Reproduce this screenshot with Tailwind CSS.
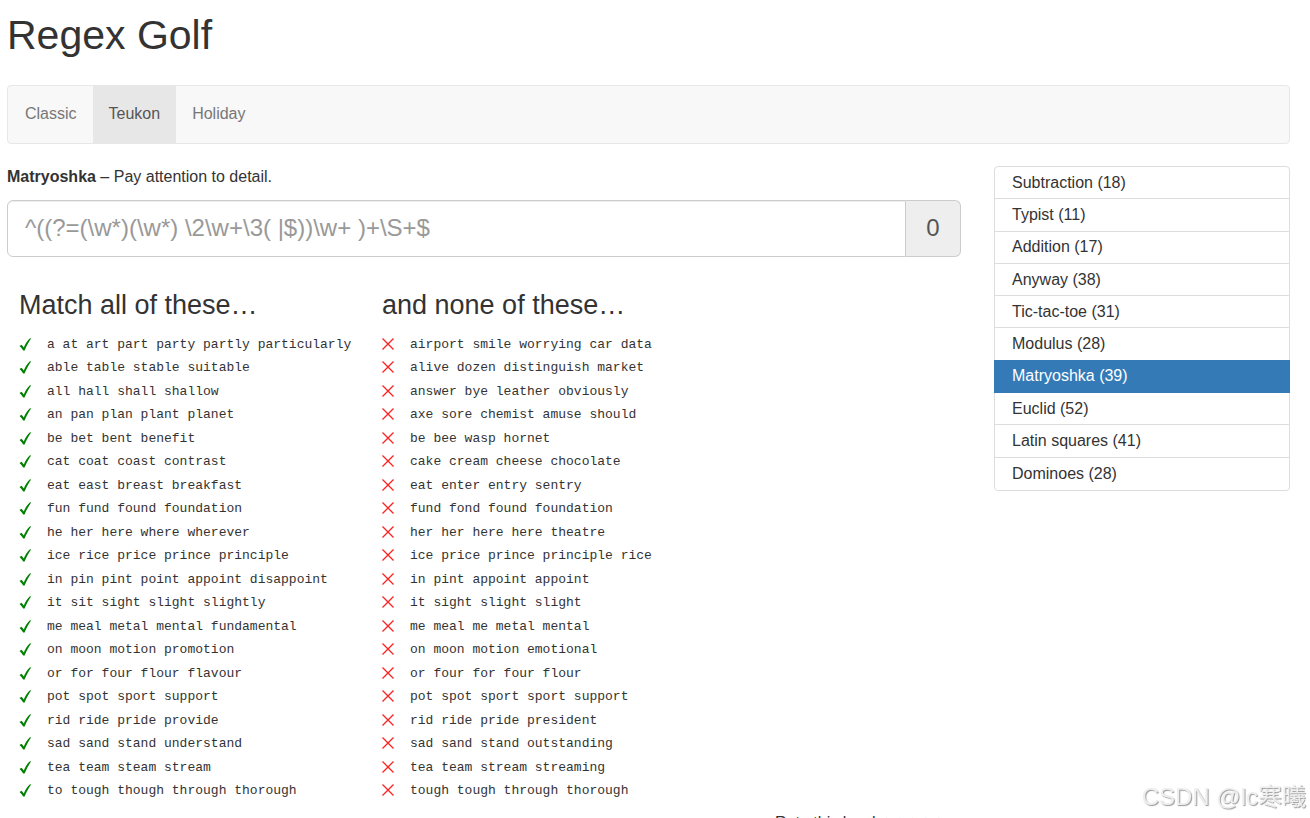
<!DOCTYPE html>
<html lang="en">
<head>
    <meta charset="UTF-8">
    <meta name="viewport" content="width=device-width, initial-scale=1.0">
    <title>Regex Golf</title>
    <script src="https://cdn.jsdelivr.net/npm/@tailwindcss/browser@4"></script>
</head>
<body class="h-screen overflow-hidden bg-white pl-[7px] pr-5 font-['Liberation_Sans',Arial,sans-serif] text-base text-[#333]">

    <!-- Shared icons -->
    <svg class="hidden" xmlns="http://www.w3.org/2000/svg">
        <symbol id="icon-yes" viewBox="0 1 14 14">
            <path d="M0.5 9 L2.6 7.8 L4.8 10.6 C6.2 6.8 8.2 3.6 11 1.2 L12.1 1.4 C9.6 5 7.4 9 5.6 13.4 L4.2 13.4 C3 11.8 1.9 10.4 0.5 9 Z" fill="#008000"/>
        </symbol>
        <symbol id="icon-no" viewBox="0 1 14 14">
            <path d="M0.5 1.5 L11.5 12.5 M11.5 1.5 L0.5 12.5" fill="none" stroke="#ff2020" stroke-width="1.3"/>
        </symbol>
    </svg>

    <h1 class="pt-[13px] text-[41px] leading-[45px]">Regex Golf</h1>

    <nav class="mt-[27px] flex h-[59px] rounded border border-[#e7e7e7] bg-[#f8f8f8] pl-px text-[#777]">
        <a href="#classic" class="px-4 py-4">Classic</a>
        <a href="#teukon" class="bg-[#e7e7e7] px-4 py-4 text-[#555]">Teukon</a>
        <a href="#holiday" class="px-4 py-4">Holiday</a>
    </nav>

    <div class="mt-[22px] grid grid-cols-[minmax(0,1fr)_296px] items-start gap-[33px]">
        <main>
            <p class="leading-[22px]"><label for="regex"><b>Matryoshka</b> – Pay attention to detail.</label></p>

            <div class="mt-3 flex h-[57px] text-2xl">
                <input id="regex" type="text" placeholder="^((?=(\w*)(\w*) \2\w+\3( |$))\w+ )+\S+$" class="min-w-0 flex-1 rounded-l-md border border-[#ccc] px-[17px] pb-[2px] shadow-[inset_0_1px_1px_rgba(0,0,0,0.075)] placeholder:text-[#999]">
                <output for="regex" class="flex w-[55px] items-center justify-center rounded-r-md border border-l-0 border-[#ccc] bg-[#eee] pb-[2px] text-[#555]">0</output>
            </div>

            <div class="mt-8 flex gap-[22px] pl-3">
                <section>
                    <h3 class="text-[27px] leading-8">Match all of these…</h3>
                    <ul id="match-list" class="mt-3 grid min-h-[470px] w-[341px] auto-rows-fr items-center font-['Liberation_Mono','Courier_New',monospace] text-[13px] leading-5"></ul>
                </section>
                <section>
                    <h3 class="text-[27px] leading-8">and none of these…</h3>
                    <ul id="none-list" class="mt-3 grid min-h-[470px] auto-rows-fr items-center font-['Liberation_Mono','Courier_New',monospace] text-[13px] leading-5"></ul>
                </section>
            </div>

            <p class="mt-[10px] pr-4 text-right leading-5">Rate this level <span class="text-[15px] text-[#bbb]">☆☆☆☆☆</span></p>
        </main>

        <aside class="grid min-h-[325px] auto-rows-fr divide-y divide-[#ddd] rounded border border-[#ddd] leading-5">
            <a href="#subtraction" class="flex items-center px-[17px]">Subtraction (18)</a>
            <a href="#typist" class="flex items-center px-[17px]">Typist (11)</a>
            <a href="#addition" class="flex items-center px-[17px]">Addition (17)</a>
            <a href="#anyway" class="flex items-center px-[17px]">Anyway (38)</a>
            <a href="#tic-tac-toe" class="flex items-center px-[17px]">Tic-tac-toe (31)</a>
            <a href="#modulus" class="flex items-center px-[17px]">Modulus (28)</a>
            <a href="#matryoshka" class="-mx-px -mt-px flex items-center border-[#337ab7] bg-[#337ab7] px-[18px] pt-px text-white">Matryoshka (39)</a>
            <a href="#euclid" class="flex items-center px-[17px]">Euclid (52)</a>
            <a href="#latin-squares" class="flex items-center px-[17px]">Latin squares (41)</a>
            <a href="#dominoes" class="flex items-center px-[17px]">Dominoes (28)</a>
        </aside>
    </div>

    <div class="fixed right-1 bottom-[5px] font-['Liberation_Sans','Noto_Sans_CJK_SC',sans-serif] text-2xl whitespace-nowrap text-[#eee] [text-shadow:1px_1px_1px_#999]">CSDN @lc寒曦</div>

    <script>
        const match = [
            'a at art part party partly particularly',
            'able table stable suitable',
            'all hall shall shallow',
            'an pan plan plant planet',
            'be bet bent benefit',
            'cat coat coast contrast',
            'eat east breast breakfast',
            'fun fund found foundation',
            'he her here where wherever',
            'ice rice price prince principle',
            'in pin pint point appoint disappoint',
            'it sit sight slight slightly',
            'me meal metal mental fundamental',
            'on moon motion promotion',
            'or for four flour flavour',
            'pot spot sport support',
            'rid ride pride provide',
            'sad sand stand understand',
            'tea team steam stream',
            'to tough though through thorough',
        ];
        const none = [
            'airport smile worrying car data',
            'alive dozen distinguish market',
            'answer bye leather obviously',
            'axe sore chemist amuse should',
            'be bee wasp hornet',
            'cake cream cheese chocolate',
            'eat enter entry sentry',
            'fund fond found foundation',
            'her her here here theatre',
            'ice price prince principle rice',
            'in pint appoint appoint',
            'it sight slight slight',
            'me meal me metal mental',
            'on moon motion emotional',
            'or four for four flour',
            'pot spot sport sport support',
            'rid ride pride president',
            'sad sand stand outstanding',
            'tea team stream streaming',
            'tough tough through thorough',
        ];

        function fill(id, icon, words) {
            document.getElementById(id).innerHTML = words.map(w =>
                `<li class="flex items-center gap-[14px] whitespace-nowrap"><svg class="size-[14px]"><use href="#${icon}"/></svg>${w}</li>`
            ).join('');
        }

        fill('match-list', 'icon-yes', match);
        fill('none-list', 'icon-no', none);
    </script>
</body>
</html>
